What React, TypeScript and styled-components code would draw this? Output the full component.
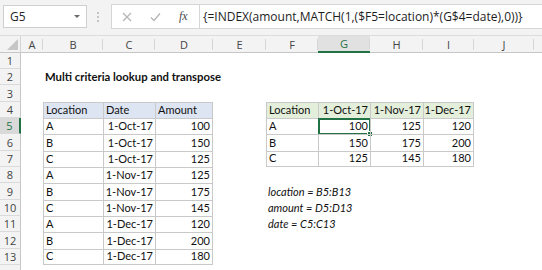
import styled, { createGlobalStyle, css } from 'styled-components';

const GlobalStyle = createGlobalStyle`
  html, body {
    margin: 0;
    padding: 0;
    background: #ffffff;
  }
  body {
    width: 542px;
    height: 270px;
    overflow: hidden;
    font-family: Lato, 'Liberation Sans', sans-serif;
  }
`;

const GREEN = '#217346';
const LINE = '#c9c9c9';

const COLS = ['A', 'B', 'C', 'D', 'E', 'F', 'G', 'H', 'I', 'J', ''];
const WIDTHS = [22, 60, 52, 58, 53, 52, 52, 53, 51, 60, 30];
const ROW_H = [16, 16, 17, 16, 16, 17, 16, 16, 17, 16, 16, 17, 16, 16];

type Fill = 'blue' | 'green';
type CellDef = { text: string; right?: boolean; fill?: Fill; bold?: boolean; italic?: boolean };

const cells: Record<string, CellDef> = {
  B2: { text: 'Multi criteria lookup and transpose', bold: true },
  F9: { text: 'location = B5:B13', italic: true },
  F10: { text: 'amount = D5:D13', italic: true },
  F11: { text: 'date = C5:C13', italic: true },
};

const table1 = [
  ['A', '1-Oct-17', '100'],
  ['B', '1-Oct-17', '150'],
  ['C', '1-Oct-17', '125'],
  ['A', '1-Nov-17', '125'],
  ['B', '1-Nov-17', '175'],
  ['C', '1-Nov-17', '145'],
  ['A', '1-Dec-17', '120'],
  ['B', '1-Dec-17', '200'],
  ['C', '1-Dec-17', '180'],
];
['Location', 'Date', 'Amount'].forEach((t, i) => {
  cells[`${'BCD'[i]}4`] = { text: t, fill: 'blue' };
});
table1.forEach((r, ri) => {
  r.forEach((t, ci) => {
    cells[`${'BCD'[ci]}${ri + 5}`] = { text: t, right: ci > 0 };
  });
});

const table2 = [
  ['Location', '1-Oct-17', '1-Nov-17', '1-Dec-17'],
  ['A', '100', '125', '120'],
  ['B', '150', '175', '200'],
  ['C', '125', '145', '180'],
];
table2.forEach((r, ri) => {
  r.forEach((t, ci) => {
    cells[`${'FGHI'[ci]}${ri + 4}`] = { text: t, right: ci > 0, fill: ri === 0 ? 'green' : undefined };
  });
});

const boxes = [
  { c1: 1, c2: 3, r1: 4, r2: 13 },
  { c1: 5, c2: 8, r1: 4, r2: 7 },
];

const Page = styled.div`
  display: flex;
  flex-direction: column;
  width: 542px;
  height: 270px;
  overflow: hidden;
`;

const FormulaBar = styled.div`
  display: flex;
  flex-shrink: 0;
  align-items: center;
  height: 36px;
  padding: 0 0 2px 3px;
  background: #f3f3f3;
  border-bottom: 1px solid #dcdcdc;
  box-sizing: border-box;
  font-family: 'Open Sans', 'Liberation Sans', sans-serif;
`;

const NameBox = styled.div`
  display: flex;
  align-items: center;
  justify-content: space-between;
  width: 84px;
  height: 23px;
  padding: 0 6px 0 6px;
  box-sizing: border-box;
  background: #ffffff;
  border: 1px solid #cfcfcf;
  font-size: 12px;
  color: #262626;
`;

const Caret = styled.span`
  width: 0;
  height: 0;
  border-left: 3px solid transparent;
  border-right: 3px solid transparent;
  border-top: 3px solid #6a6a6a;
`;

const Grip = styled.div`
  display: flex;
  flex-direction: column;
  gap: 2px;
  margin: 0 12px 0 10px;
  span {
    width: 2px;
    height: 2px;
    background: #c4c4c4;
  }
`;

const EditBox = styled.div`
  display: flex;
  align-items: stretch;
  flex: 1;
  height: 23px;
  background: #ffffff;
  border: 1px solid #d6d6d6;
  border-right: none;
`;

const Buttons = styled.div`
  display: flex;
  flex-shrink: 0;
  align-items: center;
  width: 88px;
  padding-left: 10px;
  gap: 18px;
  box-sizing: border-box;
  border-right: 1px solid #d6d6d6;
  svg {
    flex-shrink: 0;
    display: block;
  }
`;

const Fx = styled.span`
  font-family: 'Liberation Serif', serif;
  font-style: italic;
  font-size: 12px;
  color: #4a4a4a;
`;

const FormulaText = styled.div`
  display: flex;
  align-items: center;
  padding-left: 3px;
  font-size: 12px;
  color: #1e1e1e;
  white-space: nowrap;
`;

const Sheet = styled.div`
  display: grid;
  flex-shrink: 0;
  grid-template-columns: 21px ${WIDTHS.map((w) => `${w}px`).join(' ')};
  grid-template-rows: 17px ${ROW_H.map((h) => `${h}px`).join(' ')};
  background: #ffffff;
`;

const Corner = styled.div`
  position: relative;
  background: #f3f3f3;
  border-right: 1px solid #d4d4d4;
  border-bottom: 1px solid #c6c6c6;
  box-sizing: border-box;
  &::after {
    content: '';
    position: absolute;
    right: 2px;
    bottom: 2px;
    width: 0;
    height: 0;
    border-left: 11px solid transparent;
    border-bottom: 11px solid #c6c6c6;
  }
`;

const ColHead = styled.div<{ $active?: boolean }>`
  display: flex;
  align-items: center;
  justify-content: center;
  box-sizing: border-box;
  background: #f3f3f3;
  border-bottom: 1px solid #c6c6c6;
  font-family: 'Open Sans', 'Liberation Sans', sans-serif;
  font-size: 11px;
  color: #444444;
  position: relative;
  &::after {
    content: '';
    position: absolute;
    right: 0;
    top: 3px;
    bottom: 2px;
    width: 1px;
    background: #d6d6d6;
  }
  ${(p) =>
    p.$active &&
    css`
      background: #e1e1e1;
      color: ${GREEN};
      border-bottom: 2px solid ${GREEN};
    `}
`;

const RowHead = styled.div<{ $active?: boolean }>`
  display: flex;
  align-items: center;
  justify-content: center;
  box-sizing: border-box;
  background: #f3f3f3;
  border-right: 1px solid #c6c6c6;
  border-bottom: 1px solid #dadada;
  font-family: 'Open Sans', 'Liberation Sans', sans-serif;
  font-size: 11px;
  color: #444444;
  ${(p) =>
    p.$active &&
    css`
      background: #d9d9d9;
      color: ${GREEN};
      border-right: 2px solid ${GREEN};
    `}
`;

const Cell = styled.div<{
  $right?: boolean;
  $fill?: Fill;
  $bold?: boolean;
  $italic?: boolean;
  $box?: boolean;
  $lastCol?: boolean;
  $lastRow?: boolean;
}>`
  position: relative;
  display: flex;
  align-items: flex-end;
  justify-content: ${(p) => (p.$right ? 'flex-end' : 'flex-start')};
  box-sizing: border-box;
  padding: 0 2px 1px 2px;
  font-size: ${(p) => (p.$bold ? '11.3px' : '11px')};
  line-height: 14px;
  color: #111111;
  white-space: nowrap;
  overflow: visible;
  font-weight: ${(p) => (p.$bold ? 700 : 400)};
  font-style: ${(p) => (p.$italic ? 'italic' : 'normal')};
  background: ${(p) => (p.$fill === 'blue' ? '#dde5f3' : p.$fill === 'green' ? '#e3efdb' : 'transparent')};
  ${(p) =>
    p.$box &&
    css`
      border-left: 1px solid ${LINE};
      border-top: 1px solid ${LINE};
      ${p.$lastCol && `border-right: 1px solid ${LINE};`}
      ${p.$lastRow && `border-bottom: 1px solid ${LINE};`}
    `}
`;

const Selection = styled.div`
  position: absolute;
  inset: -1px -1px -1px -1px;
  border: 2px solid ${GREEN};
  pointer-events: none;
`;

const Handle = styled.div`
  position: absolute;
  right: -3px;
  bottom: -3px;
  width: 4px;
  height: 4px;
  background: ${GREEN};
  box-shadow: 0 0 0 1px #ffffff;
`;

function CrossIcon() {
  return (
    <svg width="10" height="10" viewBox="0 0 10 10">
      <path d="M1 1L9 9M9 1L1 9" stroke="#b4b4b4" strokeWidth="1.2" fill="none" />
    </svg>
  );
}

function CheckIcon() {
  return (
    <svg width="11" height="10" viewBox="0 0 11 10">
      <path d="M1 5.5L4 8.5L10 1.5" stroke="#b4b4b4" strokeWidth="1.2" fill="none" />
    </svg>
  );
}

function RowGroup({ row }: { row: number }) {
  return (
    <>
      <RowHead $active={row === 5}>{row <= 13 ? row : ''}</RowHead>
      {COLS.map((c, ci) => {
        const def = c ? cells[`${c}${row}`] : undefined;
        const box = boxes.find((b) => ci >= b.c1 && ci <= b.c2 && row >= b.r1 && row <= b.r2);
        const selected = c === 'G' && row === 5;
        return (
          <Cell
            key={ci}
            $right={def?.right}
            $fill={def?.fill}
            $bold={def?.bold}
            $italic={def?.italic}
            $box={!!box}
            $lastCol={box ? ci === box.c2 : false}
            $lastRow={box ? row === box.r2 : false}
          >
            {def?.text}
            {selected && (
              <Selection>
                <Handle />
              </Selection>
            )}
          </Cell>
        );
      })}
    </>
  );
}

export default function App() {
  const rows = ROW_H.map((_, i) => i + 1);
  return (
    <Page>
      <GlobalStyle />
      <FormulaBar>
        <NameBox>
          G5
          <Caret />
        </NameBox>
        <Grip>
          <span />
          <span />
          <span />
        </Grip>
        <EditBox>
          <Buttons>
            <CrossIcon />
            <CheckIcon />
            <Fx>fx</Fx>
          </Buttons>
          <FormulaText>{'{=INDEX(amount,MATCH(1,($F5=location)*(G$4=date),0))}'}</FormulaText>
        </EditBox>
      </FormulaBar>
      <Sheet>
        <Corner />
        {COLS.map((c, i) => (
          <ColHead key={i} $active={c === 'G'}>
            {c}
          </ColHead>
        ))}
        {rows.map((r) => (
          <RowGroup key={r} row={r} />
        ))}
      </Sheet>
    </Page>
  );
}
